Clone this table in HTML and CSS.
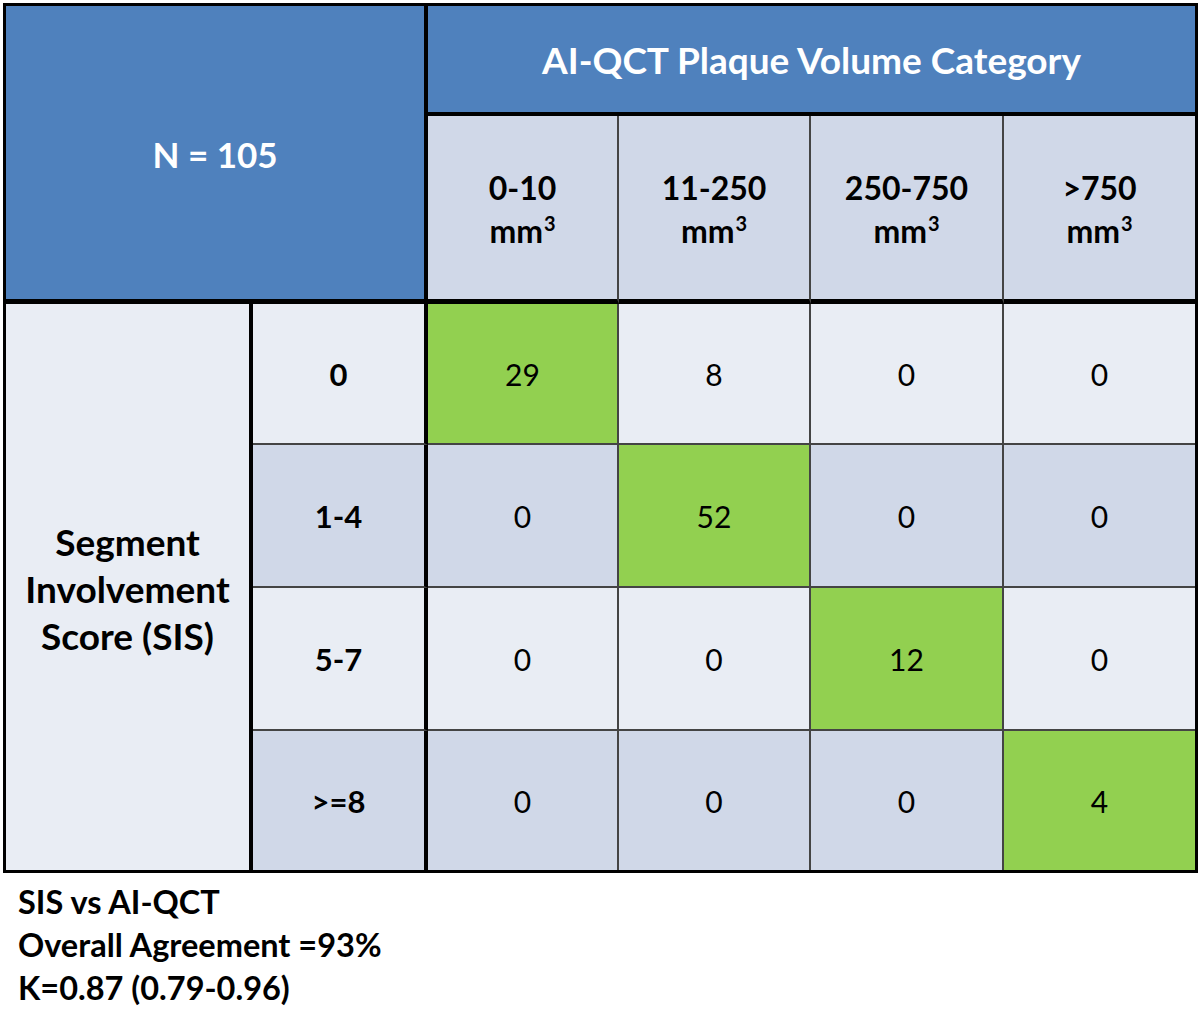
FILE: index.html
```html
<!DOCTYPE html>
<html>
<head>
<meta charset="utf-8">
<link rel="stylesheet" href="styles.css">
</head>
<body>
<div class="table">
  <div class="cell blue nhead">N = 105</div>
  <div class="cell blue cathead">AI-QCT Plaque Volume Category</div>
  <div class="cell dark colhead thin-r"><span class="lbl">0-10<br>mm<sup>3</sup></span></div>
  <div class="cell dark colhead thin-r"><span class="lbl">11-250<br>mm<sup>3</sup></span></div>
  <div class="cell dark colhead thin-r"><span class="lbl">250-750<br>mm<sup>3</sup></span></div>
  <div class="cell dark colhead"><span class="lbl">&gt;750<br>mm<sup>3</sup></span></div>

  <div class="cell light sislabel"><span class="lbl">Segment<br>Involvement<br>Score (SIS)</span></div>

  <div class="cell light rowlab thin-b">0</div>
  <div class="cell green num thin-r thin-b">29</div>
  <div class="cell light num thin-r thin-b">8</div>
  <div class="cell light num thin-r thin-b">0</div>
  <div class="cell light num thin-b">0</div>

  <div class="cell dark rowlab thin-b">1-4</div>
  <div class="cell dark num thin-r thin-b">0</div>
  <div class="cell green num thin-r thin-b">52</div>
  <div class="cell dark num thin-r thin-b">0</div>
  <div class="cell dark num thin-b">0</div>

  <div class="cell light rowlab thin-b">5-7</div>
  <div class="cell light num thin-r thin-b">0</div>
  <div class="cell light num thin-r thin-b">0</div>
  <div class="cell green num thin-r thin-b">12</div>
  <div class="cell light num thin-b">0</div>

  <div class="cell dark rowlab">&gt;=8</div>
  <div class="cell dark num thin-r">0</div>
  <div class="cell dark num thin-r">0</div>
  <div class="cell dark num thin-r">0</div>
  <div class="cell green num">4</div>
</div>
<div class="notes">
  <div>SIS vs AI-QCT</div>
  <div>Overall Agreement =93%</div>
  <div>K=0.87 (0.79-0.96)</div>
</div>
</body>
</html>
```
FILE: styles.css
```css
html, body {
  margin: 0;
  padding: 0;
  background: #ffffff;
}
body {
  font-family: Lato, "Open Sans", sans-serif;
  color: #000;
}
.table {
  margin: 3px 0 0 3px;
  width: 1195px;
  height: 870px;
  box-sizing: border-box;
  border: 3px solid #000;
  display: grid;
  grid-template-columns: 247px 175px 191px 192px 193px 191px;
  grid-template-rows: 110px 188px 141px 143px 143px 139px;
}
.cell {
  box-sizing: border-box;
  display: flex;
  align-items: center;
  justify-content: center;
  text-align: center;
}
.lbl {
  display: block;
}
.blue { background: #4f81bd; color: #fff; font-weight: 700; }
.dark { background: #d0d8e8; }
.light { background: #e9edf4; }
.green { background: #92d050; }
.thin-r { border-right: 2px solid #444; }
.thin-b { border-bottom: 2px solid #444; }

.nhead {
  grid-column: 1 / 3;
  grid-row: 1 / 3;
  border-right: 4px solid #000;
  border-bottom: 5px solid #000;
  font-size: 35px;
  padding-top: 3px;
}
.cathead {
  grid-column: 3 / 7;
  grid-row: 1;
  border-bottom: 4px solid #000;
  font-size: 37px;
  padding-top: 1px;
}
.colhead {
  font-weight: 700;
  font-size: 32px;
  line-height: 43px;
  border-bottom: 5px solid #000;
  padding-top: 3px;
}
.colhead sup {
  font-size: 20px;
  line-height: 0;
  vertical-align: 12px;
  margin-left: 1px;
}
.sislabel {
  grid-column: 1;
  grid-row: 3 / 7;
  border-right: 4px solid #000;
  font-weight: 700;
  font-size: 37px;
  line-height: 47px;
  padding-top: 2px;
}
.rowlab {
  border-right: 4px solid #000;
  font-weight: 700;
  font-size: 31px;
}
.num {
  font-size: 30px;
}
.notes {
  margin: 7px 0 0 18px;
  font-weight: 700;
  font-size: 32.5px;
  line-height: 43px;
}
```
